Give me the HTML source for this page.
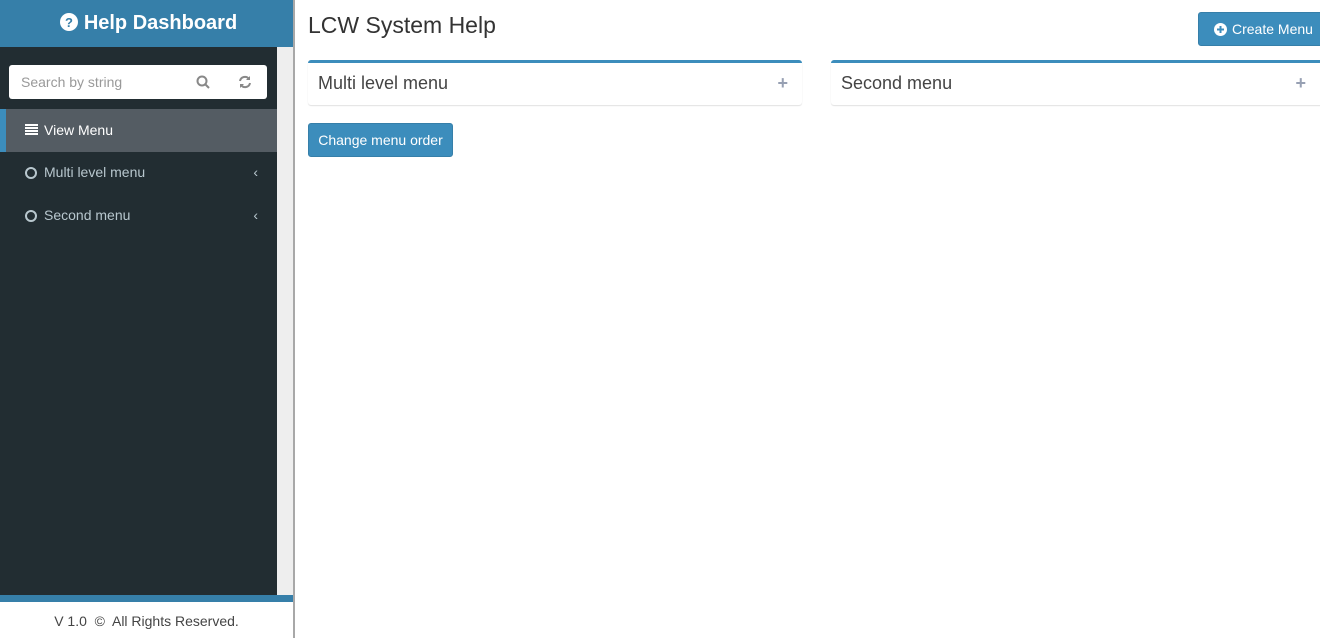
<!DOCTYPE html>
<html><head><style>
*{box-sizing:border-box;margin:0;padding:0}
body{width:1320px;height:638px;overflow:hidden;background:#fff;font-family:"Liberation Sans",sans-serif;position:relative}
.hdr{position:absolute;left:0;top:0;width:293px;height:47px;background:#367fa9;color:#fff;font-weight:bold;font-size:20px;text-align:center;line-height:47px;padding-left:4px}
.side{position:absolute;left:0;top:47px;width:277px;height:548px;background:#222d32}
.strip{position:absolute;left:277px;top:47px;width:16px;height:548px;background:#eeeeee}
.vline{position:absolute;left:293px;top:0;width:2px;height:638px;background:#a8a8a8}
.search{position:absolute;left:9px;top:65px;width:258px;height:34px;background:#fff;border-radius:3px;color:#999;font-size:14px;line-height:34px;padding-left:12px}
.item{position:absolute;left:0;width:277px;height:43px;color:#b8c7ce;font-size:14px;line-height:43px;padding-left:44px}
.item.act{background:#545c63;color:#fff;border-left:6px solid #3c8dbc;padding-left:38px}
.circ{position:absolute;left:25px;top:16px;width:12px;height:12px;border:2px solid #b8c7ce;border-radius:50%}
.chev{position:absolute;right:19px;top:0;font-size:14px}
.fbar{position:absolute;left:0;top:595px;width:293px;height:7px;background:#367fa9}
.foot{position:absolute;left:0;top:602px;width:293px;height:36px;text-align:center;font-size:14px;color:#444;line-height:38px}
h1{position:absolute;left:308px;top:12px;font-size:23px;font-weight:normal;color:#333}
.btn{position:absolute;background:#3c8dbc;color:#fff;border:1px solid #367fa9;border-radius:3px;font-size:14px}
.box{position:absolute;top:60px;height:45px;background:#fff;border-top:3px solid #3c8dbc;border-radius:3px;box-shadow:0 1px 1px rgba(0,0,0,.12);font-size:18px;color:#444;line-height:40px;padding-left:10px}
.plus{position:absolute;right:14px;top:0;color:#97a0b3;font-size:18px;font-weight:bold}
</style></head><body>
<div class="hdr"><svg width="18" height="18" viewBox="0 0 18 18" style="vertical-align:-2px;margin-right:6px"><circle cx="9" cy="9" r="9" fill="#fff"/><text x="9" y="14" text-anchor="middle" font-size="13" font-weight="bold" fill="#367fa9" font-family="Liberation Sans">?</text></svg>Help Dashboard</div>
<div class="side"></div>
<div class="strip"></div>
<div class="vline"></div>
<div class="search">Search by string
<svg style="position:absolute;left:187px;top:10px" width="14" height="14" viewBox="0 0 14 14"><circle cx="6" cy="6" r="4.5" fill="none" stroke="#888" stroke-width="2"/><path d="M9.5 9.5L13 13" stroke="#888" stroke-width="2"/></svg>
<svg style="position:absolute;left:229px;top:10px" width="14" height="14" viewBox="0 0 14 14"><path d="M2 6A5 5 0 0 1 11 4M12 8A5 5 0 0 1 3 10" fill="none" stroke="#888" stroke-width="2"/><path d="M12 1v4h-4zM2 13V9h4z" fill="#888"/></svg></div>
<div class="item act" style="top:109px"><svg style="position:absolute;left:19px;top:15px" width="13" height="11" viewBox="0 0 13 11" fill="#fff"><rect y="0" width="13" height="2"/><rect y="3" width="13" height="2"/><rect y="6" width="13" height="2"/><rect y="9" width="13" height="2"/></svg>View Menu</div>
<div class="item" style="top:151px"><span class="circ"></span>Multi level menu<span class="chev">‹</span></div>
<div class="item" style="top:194px"><span class="circ"></span>Second menu<span class="chev">‹</span></div>
<div class="fbar"></div>
<div class="foot">V 1.0 &nbsp;©&nbsp; All Rights Reserved.</div>
<h1>LCW System Help</h1>
<div class="btn" style="left:1198px;top:12px;width:130px;height:34px;line-height:32px;padding-left:15px"><svg width="13" height="13" viewBox="0 0 13 13" style="vertical-align:-2px;margin-right:5px"><circle cx="6.5" cy="6.5" r="6.5" fill="#fff"/><path d="M6.5 3v7M3 6.5h7" stroke="#3c8dbc" stroke-width="2"/></svg>Create Menu</div>
<div class="box" style="left:308px;width:494px">Multi level menu<span class="plus">+</span></div>
<div class="box" style="left:831px;width:500px">Second menu<span class="plus" style="right:25px">+</span></div>
<div class="btn" style="left:308px;top:123px;width:145px;height:34px;line-height:32px;text-align:center">Change menu order</div>
</body></html>
